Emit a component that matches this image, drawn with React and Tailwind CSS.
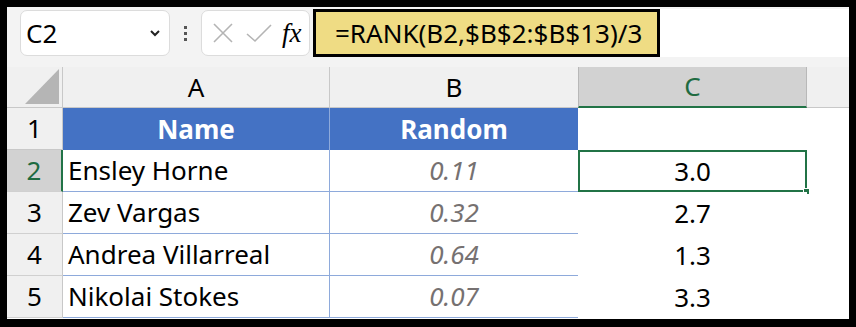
import React from "react"

const FONT = { fontFamily: '"Noto Sans", "Open Sans", Arial, sans-serif' }

const ROWS = [
  { n: 2, name: "Ensley Horne", r: "0.11", c: "3.0" },
  { n: 3, name: "Zev Vargas", r: "0.32", c: "2.7" },
  { n: 4, name: "Andrea Villarreal", r: "0.64", c: "1.3" },
  { n: 5, name: "Nikolai Stokes", r: "0.07", c: "3.3" },
]

function Toolbar() {
  return (
    <div className="flex items-center h-[60px] bg-[#f3f3f3] pl-[13px]">
      <div className="flex items-center justify-between w-[150px] h-[46px] bg-white border border-[#dcdcdc] rounded-[7px] pl-[5px] pr-[8px] mb-[8px]">
        <span className="text-[26px] text-black leading-none">C2</span>
        <svg width="12" height="8" viewBox="0 0 12 8">
          <path d="M2 2 L6 6 L10 2" fill="none" stroke="#222" strokeWidth="2" />
        </svg>
      </div>
      <div className="flex flex-col gap-[3px] w-[31px] items-center mb-[8px]">
        <span className="w-[3px] h-[3px] bg-[#555]" />
        <span className="w-[3px] h-[3px] bg-[#555]" />
        <span className="w-[3px] h-[3px] bg-[#555]" />
      </div>
      <div className="flex items-center w-[109px] h-[46px] bg-white border border-[#dcdcdc] rounded-[7px] pl-[8px] mb-[8px]">
        <svg width="26" height="26" viewBox="0 0 26 26">
          <path d="M4 4 L22 22 M22 4 L4 22" stroke="#b4b4b4" strokeWidth="1.6" />
        </svg>
        <svg width="30" height="26" viewBox="0 0 30 26" className="ml-[8px]">
          <path d="M3 14 L11 21 L27 5" fill="none" stroke="#b4b4b4" strokeWidth="1.6" />
        </svg>
        <span className="ml-[8px] text-[27px] italic text-black leading-none" style={{ fontFamily: '"Liberation Serif", serif' }}>fx</span>
      </div>
      <div className="flex flex-1 items-stretch h-[48px] bg-white ml-[3px] mb-[8px]">
        <div className="flex items-center w-[347px] bg-[#efdc84] border-[3px] border-black pl-[19px]">
          <span className="text-[26px] text-black leading-none">=RANK(B2,$B$2:$B$13)/3</span>
        </div>
      </div>
    </div>
  )
}

function ColumnHeader() {
  return (
    <div className="flex h-[41px] bg-[#f0f0f0]">
      <div className="w-[56px] flex items-end justify-end border-r border-[#c8c8c8] border-b pb-[3px] pr-[3px]">
        <svg width="34" height="35" viewBox="0 0 34 35">
          <path d="M34 0 L34 35 L0 35 Z" fill="#b5b5b5" />
        </svg>
      </div>
      <div className="w-[267px] flex items-center justify-center border-r border-b border-[#c8c8c8] text-[26px] text-black">A</div>
      <div className="w-[248px] flex items-center justify-center border-b border-[#c8c8c8] text-[26px] text-black">B</div>
      <div className="w-[229px] flex items-center justify-center bg-[#d2d2d2] border-x border-[#b8b8b8] border-b-2 border-b-[#217346] text-[26px] text-[#1e6b41]">C</div>
      <div className="flex-1 border-b border-[#c8c8c8]" />
    </div>
  )
}

function Row({ row }) {
  const selected = row.n === 2
  return (
    <div className="flex h-[42px]">
      <div className={`w-[56px] flex items-center justify-center text-[26px] border-b border-[#d0d0d0] ${selected ? "bg-[#d2d2d2] text-[#1e6b41] border-r-2 border-r-[#217346]" : "bg-[#f0f0f0] text-black border-r border-r-[#c8c8c8]"}`}>
        {row.n}
      </div>
      <div className="w-[267px] flex items-center pl-[5px] bg-white border-r border-b border-[#8eaadb] text-[26px] text-black">
        {row.name}
      </div>
      <div className="w-[248px] flex items-center justify-center bg-white border-b border-[#8eaadb] text-[26px] italic text-[#767171]">
        {row.r}
      </div>
      <div className={`relative w-[229px] flex items-center justify-center bg-white text-[26px] text-black ${selected ? "border-2 border-[#217346]" : ""}`}>
        {row.c}
        {selected && <span className="absolute right-[-5px] bottom-[-5px] w-[7px] h-[7px] bg-[#217346] border border-white" />}
      </div>
      <div className="flex-1 bg-white" />
    </div>
  )
}

export default function App() {
  return (
    <div className="w-[856px] h-[327px] bg-black p-[7px] pb-[8px] overflow-hidden" style={FONT}>
      <div className="w-[842px] h-[312px] bg-white overflow-hidden">
        <Toolbar />
        <ColumnHeader />
        <div className="flex h-[42px]">
          <div className="w-[56px] flex items-center justify-center bg-[#f0f0f0] border-r border-b border-[#c8c8c8] text-[26px] text-black">1</div>
          <div className="w-[267px] flex items-center justify-center bg-[#4472c4] border-r border-[#8eaadb] text-[26px] font-bold text-white">Name</div>
          <div className="w-[248px] flex items-center justify-center bg-[#4472c4] text-[26px] font-bold text-white">Random</div>
          <div className="flex-1 bg-white" />
        </div>
        {ROWS.map((row) => (
          <Row key={row.n} row={row} />
        ))}
      </div>
    </div>
  )
}
